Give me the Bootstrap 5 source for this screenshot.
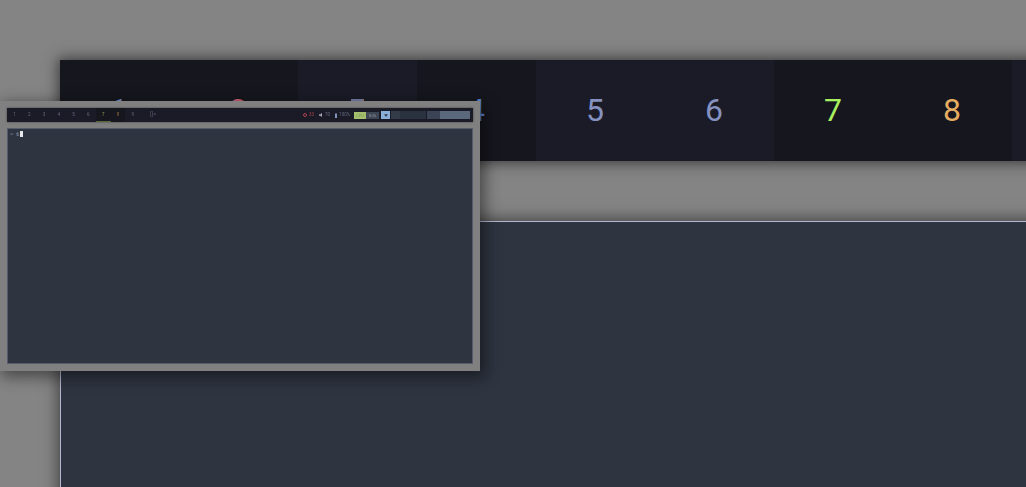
<!DOCTYPE html>
<html lang="en">
<head>
<meta charset="utf-8">
<title>Desktop</title>
<link href="https://cdn.jsdelivr.net/npm/bootstrap@5.3.0/dist/css/bootstrap.min.css" rel="stylesheet">
<style>
html,body{height:100%;margin:0;background:#848484;overflow:hidden;font-family:Roboto,"Liberation Sans",sans-serif}
.desk{position:relative;width:1026px;height:487px;overflow:hidden}
.bigbar{position:absolute;left:60px;top:60px;width:1100px;height:101px;background:#16161e;box-shadow:0 0 13px 2px rgba(0,0,0,.55)}
.cell{position:relative;width:119px;height:101px;flex:none;font-size:32px;line-height:100px;text-align:center;padding-right:1px;background:#16161e}
.cell.lit{background:#1a1b26}
.c1{color:#7d9fd6}.c2{color:#d4607a}.c4{color:#5d85d8}.c5{color:#8592c0}.c7{color:#a9f060}.c8{color:#e6ad62}
.c3{color:#838bb4}
.c3::before{content:"";position:absolute;left:53px;top:39px;width:12px;height:3px;background:#7b82ab;box-shadow:1px 0 0 #a5805a}
.mainwin{position:absolute;left:60px;top:221px;width:1100px;height:400px;background:#2e3440;border:1px solid #b4b6cf;box-shadow:0 0 14px 2px rgba(0,0,0,.5)}
.miniwin{position:absolute;left:0;top:101px;width:480px;height:270px;background:#808080;padding:7px;box-shadow:3px 4px 14px 2px rgba(0,0,0,.45)}
.minibar{height:14px;background:#1a1b26;font-size:4.5px;line-height:14px;color:#666a82;box-shadow:0 0 2px rgba(0,0,0,.5)}
.minibar>*{filter:blur(.25px)}
.mcell{width:14.8px;flex:none;text-align:center;height:14px}
.mcell.dk{background:#16161e}
.mcell.on{box-shadow:inset 0 -1px 0 #55663c}
.g7{color:#7f9f4c}.g8{color:#8f6c3f}
.layout{margin-left:10px;letter-spacing:.5px}
.terminal{height:236px;margin-top:6px;background:#2e3440;box-shadow:inset 0 0 0 1px #565c6b;font-size:5px;line-height:7px;color:#9aa0ae;padding:3px;word-spacing:1.5px}
.curs{display:inline-block;width:2.5px;height:6px;background:#e6e8ee;vertical-align:top;margin-left:1.5px}
.status{font-size:4.5px;line-height:8px}
.dot{width:4px;height:4px;border-radius:50%;border:1px solid #a8414f;flex:none}
.red{color:#a8414f;margin-left:2px}
.ico{flex:none;display:block}
.gap1{margin-left:5px}
.txt{margin-left:2px}
.cpu{background:#a3be6c;color:#7f9655;width:12px;height:7px;line-height:7px;text-align:center;margin-left:4px;font-size:4px}
.clock{background:#3f4653;color:#8b919c;width:13px;height:7px;line-height:7px;text-align:center;font-size:4px}
.tray{background:#88b0d8;width:9px;height:8px;margin-left:2px;display:flex;align-items:center;justify-content:center}
.seg{height:8px;flex:none}
.s1{width:9px;margin-left:1px;background:#333b49}
.s2{width:26px;background:#2b323f}
.s3{width:13px;margin-left:1px;background:#3a4454}
.s4{width:30px;margin-right:3px;background:#5a6a7c}
</style>
</head>
<body>
<div class="desk">
  <div class="mainwin"></div>
  <div class="bigbar d-flex">
    <div class="cell c1">1</div>
    <div class="cell c2">2</div>
    <div class="cell lit c3">3</div>
    <div class="cell c4">4</div>
    <div class="cell lit c5">5</div>
    <div class="cell lit c5">6</div>
    <div class="cell c7">7</div>
    <div class="cell c8">8</div>
    <div class="cell lit c5">9</div>
  </div>
  <div class="miniwin">
    <div class="minibar d-flex align-items-center">
      <div class="mcell">1</div><div class="mcell">2</div><div class="mcell">3</div>
      <div class="mcell">4</div><div class="mcell">5</div><div class="mcell">6</div>
      <div class="mcell dk on g7">7</div>
      <div class="mcell dk g8">8</div>
      <div class="mcell">9</div>
      <div class="layout">[]=</div>
      <div class="ms-auto d-flex align-items-center status">
        <span class="dot"></span><span class="red">33</span>
        <svg class="ico gap1" width="4" height="4" viewBox="0 0 4 4"><path d="M0 1.3h1.3L3 0v4L1.3 2.7H0z" fill="#a0a4b5"/></svg><span class="txt">70</span>
        <svg class="ico gap1" width="2" height="5" viewBox="0 0 2 5"><path d="M0 .5h2V5H0z" fill="#7f93bb"/></svg><span class="txt">100%</span>
        <span class="cpu">CPU</span><span class="clock">8:26</span>
        <span class="tray"><svg class="ico" width="4" height="3" viewBox="0 0 5 4"><path d="M0 .8C1.500-.2 3.500-.2 5 .8L2.500 4z" fill="#3a4656"/></svg></span>
        <span class="seg s1"></span>
        <span class="seg s2"></span>
        <span class="seg s3"></span>
        <span class="seg s4"></span>
      </div>
    </div>
    <div class="terminal">~ 6<span class="curs"></span></div>
  </div>
</div>
<script src="https://cdn.jsdelivr.net/npm/bootstrap@5.3.0/dist/js/bootstrap.bundle.min.js"></script>
</body>
</html>
